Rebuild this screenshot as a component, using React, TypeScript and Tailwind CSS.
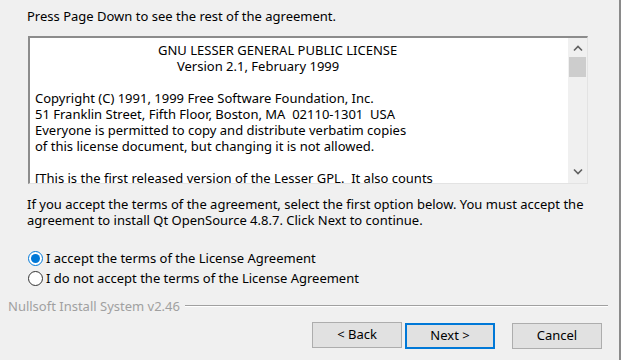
import React from 'react';

const font = { fontFamily: '"Noto Sans", "Segoe UI", sans-serif' };

function Radio({ checked, label }: { checked: boolean; label: string }) {
  return (
    <label className="flex items-center h-[20px] text-[13px] leading-[16px] text-black">
      <span
        className={
          checked
            ? 'w-[15px] h-[15px] rounded-full border border-[#0078d7] bg-white flex items-center justify-center'
            : 'w-[15px] h-[15px] rounded-full border border-[#333] bg-white'
        }
      >
        {checked && <span className="w-[9px] h-[9px] rounded-full bg-[#0078d7]" />}
      </span>
      <span className="ml-[3px]">{label}</span>
    </label>
  );
}

function Btn({ label, primary }: { label: string; primary?: boolean }) {
  return (
    <button
      className={
        primary
          ? 'w-[90px] h-[26px] bg-[#e1e1e1] border-2 border-[#0078d7] text-[13px] text-black'
          : 'w-[90px] h-[26px] bg-[#e1e1e1] border border-[#adadad] text-[13px] text-black'
      }
    >
      {label}
    </button>
  );
}

export default function App() {
  const license = [
    { t: 'GNU LESSER GENERAL PUBLIC LICENSE', indent: 'pl-[123px]' },
    { t: 'Version 2.1, February 1999', indent: 'pl-[142px]' },
    { t: '\u00a0', indent: '' },
    { t: 'Copyright (C) 1991, 1999 Free Software Foundation, Inc.', indent: '' },
    { t: '51 Franklin Street, Fifth Floor, Boston, MA  02110-1301  USA', indent: '' },
    { t: 'Everyone is permitted to copy and distribute verbatim copies', indent: '' },
    { t: 'of this license document, but changing it is not allowed.', indent: '' },
    { t: '\u00a0', indent: '' },
    { t: '[This is the first released version of the Lesser GPL.  It also counts', indent: '' },
  ];

  return (
    <div style={font} className="w-[621px] h-[360px] bg-[#f0f0f0] border-r-2 border-[#8a8a8a] flex flex-col overflow-hidden">
      <p className="mt-[8px] ml-[27px] text-[13px] leading-[16px] text-black">
        Press Page Down to see the rest of the agreement.
      </p>

      {/* license box */}
      <div className="mt-[12px] ml-[28px] w-[560px] h-[148px] bg-white border-t-2 border-l-2 border-[#8c8c8c] border-r border-b border-r-[#e3e3e3] border-b-[#e3e3e3] flex">
        <div className="flex-1 overflow-hidden pl-[5px] pt-[4px] whitespace-pre text-[13px] leading-[16px] text-black">
          {license.map((l, i) => (
            <div key={i} className={l.indent}>
              {l.t}
            </div>
          ))}
        </div>
        <div className="w-[19px] bg-[#f0f0f0] flex flex-col items-center">
          <svg width="10" height="7" viewBox="0 0 10 7" className="mt-[7px]">
            <path d="M1 5.5 L5 1.5 L9 5.5" fill="none" stroke="#606060" strokeWidth="1.6" />
          </svg>
          <div className="mt-[5px] w-[17px] h-[20px] bg-[#cdcdcd]" />
          <div className="flex-1" />
          <svg width="10" height="7" viewBox="0 0 10 7" className="mb-[8px]">
            <path d="M1 1.5 L5 5.5 L9 1.5" fill="none" stroke="#606060" strokeWidth="1.6" />
          </svg>
        </div>
      </div>

      <p className="mt-[12px] ml-[27px] w-[580px] text-[13px] leading-[16px] text-black">
        If you accept the terms of the agreement, select the first option below. You must accept the agreement to install Qt OpenSource 4.8.7. Click Next to continue.
      </p>

      <div className="mt-[20px] ml-[28px] flex flex-col">
        <Radio checked label="I accept the terms of the License Agreement" />
        <Radio checked={false} label="I do not accept the terms of the License Agreement" />
      </div>

      <div className="mt-[10px] ml-[8px] mr-[11px] flex items-center">
        <span className="text-[13px] leading-[16px] text-[#a0a0a0]">Nullsoft Install System v2.46</span>
        <div className="flex-1 ml-[5px] border-t border-[#a0a0a0] border-b border-b-white" />
      </div>

      <div className="mt-[8px] flex pl-[312px]">
        <Btn label="< Back" />
        <div className="ml-[3px]">
          <Btn label="Next >" primary />
        </div>
        <div className="ml-[17px]">
          <Btn label="Cancel" />
        </div>
      </div>
    </div>
  );
}
